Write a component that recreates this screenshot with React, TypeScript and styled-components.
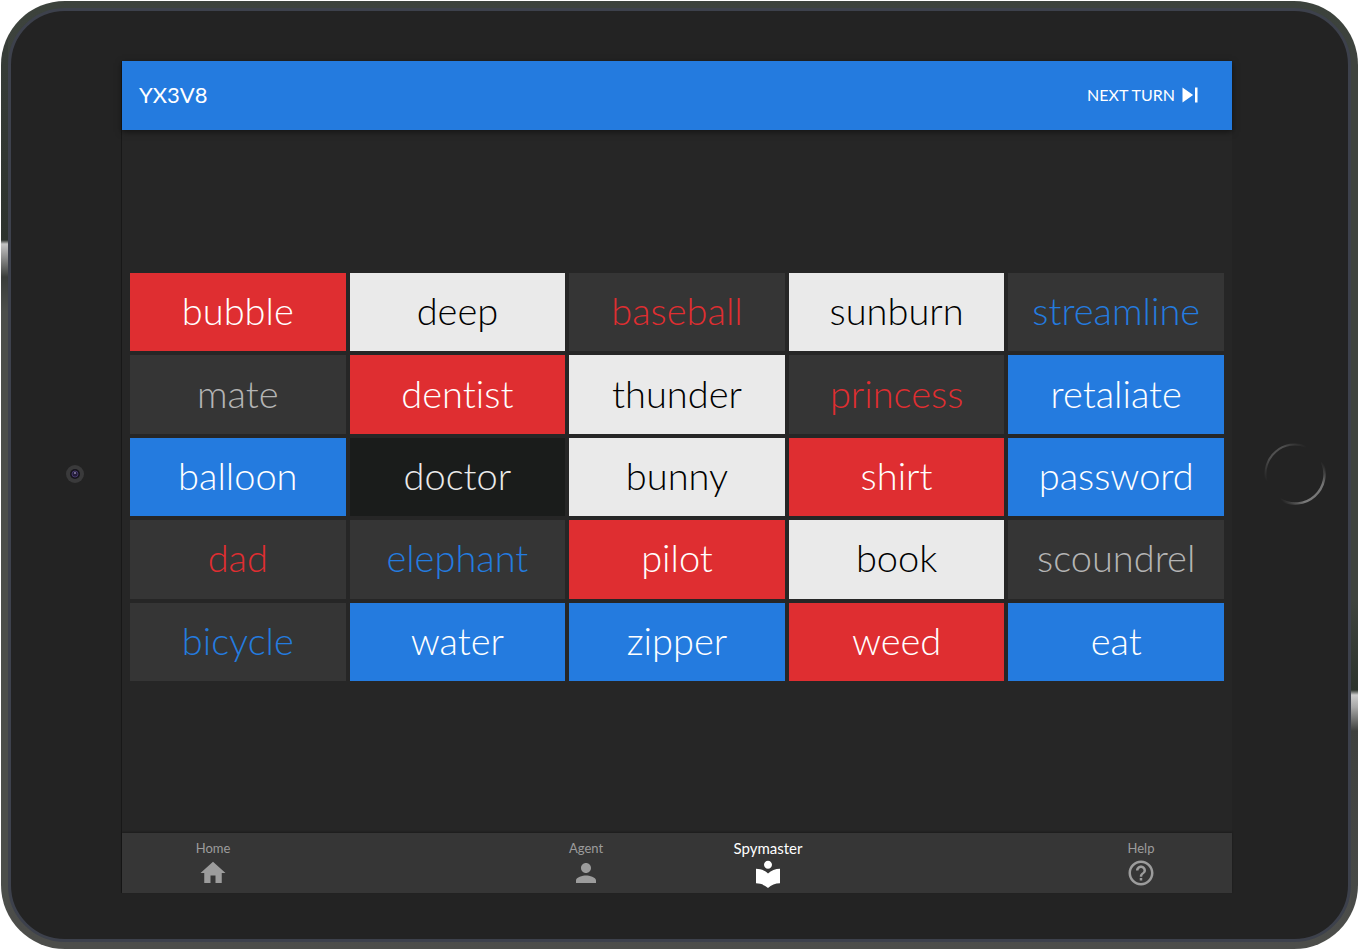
import React from "react";
import styled, { createGlobalStyle } from "styled-components";
import {
  MdHelpOutline,
  MdHome,
  MdLocalLibrary,
  MdPerson,
  MdSkipNext,
} from "react-icons/md";

type Tone =
  | "red"
  | "blue"
  | "neutral"
  | "assassin"
  | "hiddenRed"
  | "hiddenBlue"
  | "hiddenNeutral";

const tones: Record<Tone, { bg: string; fg: string }> = {
  red: { bg: "#df2e31", fg: "#ffffff" },
  blue: { bg: "#247bdf", fg: "#ffffff" },
  neutral: { bg: "#eaeaea", fg: "#000000" },
  assassin: { bg: "#1a1c1b", fg: "#eaeaea" },
  hiddenRed: { bg: "#353535", fg: "#df2e31" },
  hiddenBlue: { bg: "#353535", fg: "#247bdf" },
  hiddenNeutral: { bg: "#353535", fg: "#b4b4b4" },
};

const words: [string, Tone][] = [
  ["bubble", "red"],
  ["deep", "neutral"],
  ["baseball", "hiddenRed"],
  ["sunburn", "neutral"],
  ["streamline", "hiddenBlue"],
  ["mate", "hiddenNeutral"],
  ["dentist", "red"],
  ["thunder", "neutral"],
  ["princess", "hiddenRed"],
  ["retaliate", "blue"],
  ["balloon", "blue"],
  ["doctor", "assassin"],
  ["bunny", "neutral"],
  ["shirt", "red"],
  ["password", "blue"],
  ["dad", "hiddenRed"],
  ["elephant", "hiddenBlue"],
  ["pilot", "red"],
  ["book", "neutral"],
  ["scoundrel", "hiddenNeutral"],
  ["bicycle", "hiddenBlue"],
  ["water", "blue"],
  ["zipper", "blue"],
  ["weed", "red"],
  ["eat", "blue"],
];

const GlobalStyle = createGlobalStyle`
  *, *::before, *::after { box-sizing: border-box; }
  body {
    margin: 0;
    background: #ffffff;
    font-family: Lato, "Open Sans", sans-serif;
    font-variant-ligatures: none;
  }
  button { font: inherit; border: 0; padding: 0; margin: 0; cursor: pointer; }
`;

const Stage = styled.div`
  display: flex;
  min-height: 100vh;
  padding: 1px 0 1px 1px;
`;

const Shell = styled.div`
  flex: 1;
  display: flex;
  padding: 7px;
  border-radius: 64px;
  background:
    linear-gradient(
        #3a403b 0,
        #2c322d 239px,
        #c4c4c4 243px,
        #a0a0a0 252px,
        #3a3d3a 276px,
        #4b4e4a 310px,
        #4b4e4a 100%
      )
      left / 7px 100% no-repeat,
    linear-gradient(
        #3e433e 0,
        #3e433e 600px,
        #2c332c 689px,
        #cccccc 694px,
        #a8a8a8 706px,
        #3e403e 730px,
        #4b4d4a 100%
      )
      right / 7px 100% no-repeat,
    linear-gradient(#3c423c, #4c4d4a);
`;

const Glass = styled.div`
  flex: 1;
  display: grid;
  grid-template-columns: 111px minmax(0, 1fr) 116px;
  align-items: center;
  padding: 50px 0 46px;
  border: 3px solid #3d414c;
  border-radius: 57px;
  background: #232323;
`;

const BezelPart = styled.div`
  display: flex;
  justify-content: center;
  padding-bottom: 6px;
`;

const CameraPart = styled(BezelPart)`
  padding-left: 17px;
`;

const HomePart = styled(BezelPart)`
  padding-left: 10px;
`;

const Screen = styled.div`
  align-self: stretch;
  display: flex;
  flex-direction: column;
  background: #262626;
  box-shadow: -1px 0 0 #181818;
`;

const TopBar = styled.header`
  z-index: 1;
  display: flex;
  align-items: center;
  justify-content: space-between;
  height: 69px;
  padding: 0 27px 2px 17px;
  color: #ffffff;
  background: #247bdf;
  box-shadow: 0 2px 6px rgba(0, 0, 0, 0.5);
`;

const GameCode = styled.h1`
  margin: 0;
  font-size: 22px;
  line-height: 28px;
  font-weight: 400;
`;

const TurnButton = styled.button`
  display: flex;
  align-items: center;
  color: #ffffff;
  background: none;
  font-size: 16px;
  line-height: 24px;
`;

const Board = styled.main`
  flex: 1;
  display: flex;
  flex-direction: column;
  justify-content: center;
  padding: 8px 8px 17px;
`;

const CardGrid = styled.div`
  display: grid;
  grid-template-columns: repeat(5, minmax(0, 1fr));
  grid-auto-rows: 1fr;
  gap: 4px;
  min-height: 408px;
`;

const Card = styled.button<{ $tone: Tone }>`
  padding: 0 0 4px;
  text-align: center;
  font-size: 38px;
  line-height: 48px;
  font-weight: 300;
  font-variant-ligatures: none;
  color: ${(p) => tones[p.$tone].fg};
  background: ${(p) => tones[p.$tone].bg};
`;

const TabBar = styled.nav`
  display: flex;
  justify-content: space-between;
  height: 60px;
  background: #363636;
  box-shadow: 0 -1px 2px rgba(0, 0, 0, 0.3);
`;

const TabGroup = styled.div`
  display: flex;
`;

const Tab = styled.button<{ $active?: boolean }>`
  display: flex;
  flex-direction: column;
  align-items: center;
  width: 182px;
  padding-top: 5px;
  color: ${(p) => (p.$active ? "#ffffff" : "#9c9c9c")};
  background: none;
  font-size: ${(p) => (p.$active ? 15 : 13)}px;
  line-height: 20px;
`;

const Camera = () => (
  <svg width="18" height="18" viewBox="0 0 18 18" aria-hidden="true">
    <circle cx="9" cy="9" r="9" fill="#3a3a3b" />
    <circle cx="9" cy="9" r="5" fill="#17151c" />
    <circle cx="9" cy="9" r="3" fill="#241d38" stroke="#43366a" />
    <circle cx="9" cy="8" r="1" fill="#8f86a8" />
  </svg>
);

const HomeRing = () => (
  <svg width="62" height="62" viewBox="0 0 62 62" fill="none" aria-hidden="true">
    <defs>
      <linearGradient id="ringUpper" x1="2" y1="38" x2="42" y2="3" gradientUnits="userSpaceOnUse">
        <stop offset="0" stopColor="#232323" />
        <stop offset="0.35" stopColor="#505050" />
        <stop offset="0.65" stopColor="#505050" />
        <stop offset="1" stopColor="#232323" />
      </linearGradient>
      <linearGradient id="ringLower" x1="16" y1="56" x2="58" y2="19" gradientUnits="userSpaceOnUse">
        <stop offset="0" stopColor="#232323" />
        <stop offset="0.3" stopColor="#7a7a7a" />
        <stop offset="0.75" stopColor="#747474" />
        <stop offset="1" stopColor="#232323" />
      </linearGradient>
    </defs>
    <path d="M2.3 38A29.5 29.5 0 0 1 42 3.6" stroke="url(#ringUpper)" strokeWidth="2" />
    <path d="M58 19A29.5 29.5 0 0 1 16 56.4" stroke="url(#ringLower)" strokeWidth="2.4" />
  </svg>
);

export default function App() {
  return (
    <>
      <GlobalStyle />
      <Stage>
        <Shell>
          <Glass>
            <CameraPart>
              <Camera />
            </CameraPart>
            <Screen>
              <TopBar>
                <GameCode>YX3V8</GameCode>
                <TurnButton type="button">
                  NEXT TURN
                  <MdSkipNext size={30} aria-hidden="true" />
                </TurnButton>
              </TopBar>
              <Board>
                <CardGrid>
                  {words.map(([word, tone]) => (
                    <Card key={word} type="button" $tone={tone}>
                      {word}
                    </Card>
                  ))}
                </CardGrid>
              </Board>
              <TabBar>
                <Tab type="button">
                  Home
                  <MdHome size={30} aria-hidden="true" />
                </Tab>
                <TabGroup>
                  <Tab type="button">
                    Agent
                    <MdPerson size={30} aria-hidden="true" />
                  </Tab>
                  <Tab type="button" $active aria-current="page">
                    Spymaster
                    <MdLocalLibrary size={32} aria-hidden="true" />
                  </Tab>
                </TabGroup>
                <Tab type="button">
                  Help
                  <MdHelpOutline size={30} aria-hidden="true" />
                </Tab>
              </TabBar>
            </Screen>
            <HomePart>
              <HomeRing />
            </HomePart>
          </Glass>
        </Shell>
      </Stage>
    </>
  );
}
